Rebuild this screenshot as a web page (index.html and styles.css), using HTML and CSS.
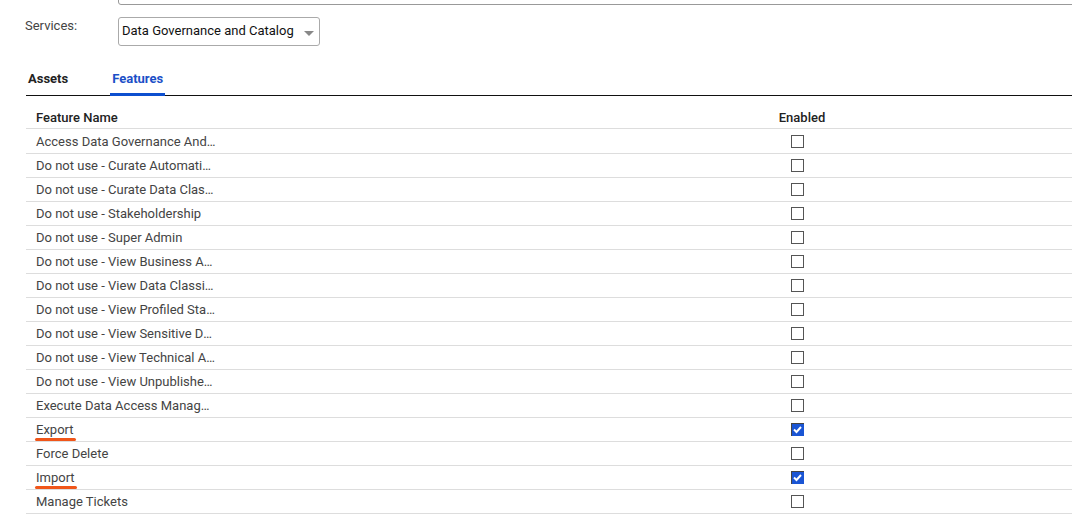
FILE: index.html
```html
<!DOCTYPE html>
<html lang="en">
<head>
    <meta charset="UTF-8">
    <title>Services - Features</title>
    <link rel="stylesheet" href="styles.css">
</head>
<body>

<div class="page">
    <div class="form-row top-row">
        <div class="form-label"></div>
        <div class="text-field"></div>
    </div>
    <div class="form-row">
        <div class="form-label">Services:</div>
        <div class="select-box">
            <span class="select-value">Data Governance and Catalog</span>
            <span class="select-arrow"></span>
        </div>
    </div>

    <div class="tabs">
        <div class="tab">Assets</div>
        <div class="tab active">Features</div>
    </div>

    <div class="feature-table">
        <div class="row head">
            <div class="cell name">Feature Name</div>
            <div class="cell enabled">Enabled</div>
        </div>
        <div class="row first"><div class="cell name">Access Data Governance And Catalog</div><div class="cell enabled"><span class="box"></span></div></div>
        <div class="row"><div class="cell name">Do not use - Curate Automation Rules</div><div class="cell enabled"><span class="box"></span></div></div>
        <div class="row"><div class="cell name">Do not use - Curate Data Classifications</div><div class="cell enabled"><span class="box"></span></div></div>
        <div class="row"><div class="cell name">Do not use - Stakeholdership</div><div class="cell enabled"><span class="box"></span></div></div>
        <div class="row"><div class="cell name">Do not use - Super Admin</div><div class="cell enabled"><span class="box"></span></div></div>
        <div class="row"><div class="cell name">Do not use - View Business Assets</div><div class="cell enabled"><span class="box"></span></div></div>
        <div class="row"><div class="cell name">Do not use - View Data Classifications</div><div class="cell enabled"><span class="box"></span></div></div>
        <div class="row"><div class="cell name">Do not use - View Profiled Statistics</div><div class="cell enabled"><span class="box"></span></div></div>
        <div class="row"><div class="cell name">Do not use - View Sensitive Data</div><div class="cell enabled"><span class="box"></span></div></div>
        <div class="row"><div class="cell name">Do not use - View Technical Assets</div><div class="cell enabled"><span class="box"></span></div></div>
        <div class="row"><div class="cell name">Do not use - View Unpublished Assets</div><div class="cell enabled"><span class="box"></span></div></div>
        <div class="row"><div class="cell name">Execute Data Access Management</div><div class="cell enabled"><span class="box"></span></div></div>
        <div class="row"><div class="cell name"><span class="marked">Export</span></div><div class="cell enabled"><span class="box checked"><svg viewBox="0 0 13 13" width="13" height="13"><path d="M3 6.5 L5.5 9 L10 4" fill="none" stroke="#fff" stroke-width="2"/></svg></span></div></div>
        <div class="row"><div class="cell name">Force Delete</div><div class="cell enabled"><span class="box"></span></div></div>
        <div class="row"><div class="cell name"><span class="marked">Import</span></div><div class="cell enabled"><span class="box checked"><svg viewBox="0 0 13 13" width="13" height="13"><path d="M3 6.5 L5.5 9 L10 4" fill="none" stroke="#fff" stroke-width="2"/></svg></span></div></div>
        <div class="row"><div class="cell name">Manage Tickets</div><div class="cell enabled"><span class="box"></span></div></div>
    </div>
</div>

</body>
</html>
```

FILE: styles.css
```css
body {
    margin: 0;
    font-family: Roboto, "Liberation Sans", Arial, sans-serif;
    font-size: 13px;
    color: #333;
    background: #fff;
    overflow: hidden;
}
.page {
    width: 1100px;
}
.form-row {
    display: flex;
    align-items: flex-start;
    margin-bottom: 12px;
}
.top-row {
    margin-top: -26px;
}
.form-label {
    width: 93px;
    padding-left: 25px;
    padding-top: 1px;
    color: #444;
}
.text-field {
    flex: 1;
    height: 29px;
    border: 1px solid #999;
    border-radius: 3px;
}
.select-box {
    width: 192px;
    height: 25px;
    border: 1px solid #aaa;
    border-radius: 3px;
    display: flex;
    align-items: center;
    justify-content: space-between;
    padding: 0 5px 2px 3px;
    color: #111;
}
.select-arrow {
    width: 0;
    height: 0;
    border-left: 5px solid transparent;
    border-right: 5px solid transparent;
    border-top: 5px solid #888;
    margin-top: 5px;
}
.tabs {
    display: flex;
    margin-left: 26px;
    margin-top: 22px;
    border-bottom: 1px solid #111;
    gap: 40px;
}
.tab {
    font-weight: bold;
    color: #222;
    padding: 3px 2px 7px;
    border-bottom: 3px solid transparent;
    margin-bottom: -1px;
}
.tab.active {
    color: #1b4fc7;
    border-bottom-color: #0d4fcf;
}
.feature-table {
    margin-left: 26px;
}
.row {
    display: flex;
    height: 23px;
    line-height: 23px;
    border-bottom: 1px solid #ddd;
    color: #444;
}
.row.first {
    padding-top: 1px;
    box-sizing: border-box;
    height: 25px;
}
.row.head {
    height: 32px;
    line-height: 16px;
    align-items: flex-end;
    font-weight: 500;
    color: #222;
}
.head .cell {
    padding-bottom: 2px;
}
.cell.name {
    width: 180px;
    padding-left: 10px;
    white-space: nowrap;
    overflow: hidden;
    text-overflow: ellipsis;
    margin-right: 514px;
}
.row:not(.head) .cell.name {
    height: 23px;
}
.cell.enabled {
    width: 134px;
    display: flex;
    justify-content: center;
    align-items: center;
}
.row:not(.head) .cell.enabled {
    height: 23px;
}
.head .cell.enabled {
    padding-left: 5px;
}
.box {
    display: inline-block;
    width: 11px;
    height: 11px;
    border: 1px solid #555;
}
.box.checked {
    width: 13px;
    height: 13px;
    border: none;
    background: #1a55d4;
    box-shadow: inset 1px 1px 0 #444;
}
.box svg {
    display: block;
}
.marked {
    position: relative;
    display: inline-block;
}
.marked::after {
    content: "";
    position: absolute;
    left: -1px;
    right: -2px;
    bottom: 0;
    height: 3px;
    border-radius: 2px;
    background: #f0561a;
}
```
